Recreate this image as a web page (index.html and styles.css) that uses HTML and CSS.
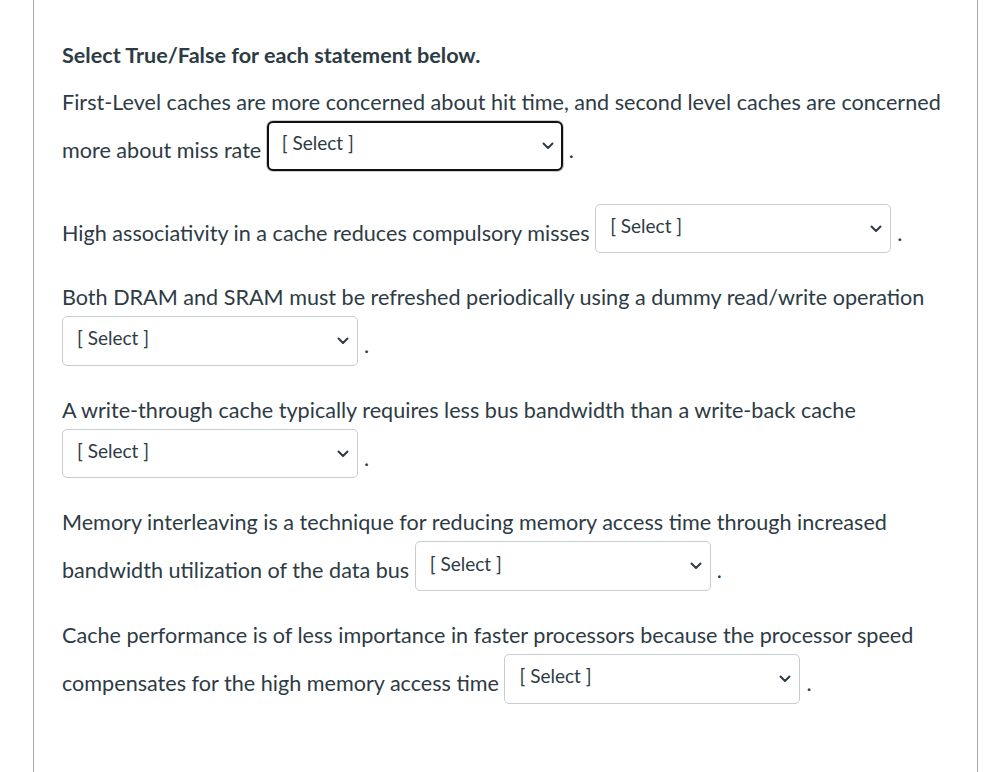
FILE: index.html
```html
<!DOCTYPE html>
<html lang="en">
<head>
<meta charset="utf-8">
<title>Quiz question</title>
<link rel="stylesheet" href="styles.css">
</head>
<body>
<div class="question">
  <p class="title">Select True/False for each statement below.</p>
  <p class="q">First-Level caches are more concerned about hit time, and second level caches are concerned more about miss rate <span class="dd focused"><select><option>[ Select ]</option><option>True</option><option>False</option></select><svg class="chev" viewBox="0 0 12 8" width="12" height="8"><path d="M1.5 1.5 L6 6 L10.5 1.5" fill="none" stroke="#2d3b45" stroke-width="2" stroke-linecap="round" stroke-linejoin="round"/></svg></span>.</p>
  <p class="q">High associativity in a cache reduces compulsory misses <span class="dd"><select><option>[ Select ]</option><option>True</option><option>False</option></select><svg class="chev" viewBox="0 0 12 8" width="12" height="8"><path d="M1.5 1.5 L6 6 L10.5 1.5" fill="none" stroke="#2d3b45" stroke-width="2" stroke-linecap="round" stroke-linejoin="round"/></svg></span>.</p>
  <p class="q">Both DRAM and SRAM must be refreshed periodically using a dummy read/write operation <span class="dd"><select><option>[ Select ]</option><option>True</option><option>False</option></select><svg class="chev" viewBox="0 0 12 8" width="12" height="8"><path d="M1.5 1.5 L6 6 L10.5 1.5" fill="none" stroke="#2d3b45" stroke-width="2" stroke-linecap="round" stroke-linejoin="round"/></svg></span>.</p>
  <p class="q">A write-through cache typically requires less bus bandwidth than a write-back cache <span class="dd"><select><option>[ Select ]</option><option>True</option><option>False</option></select><svg class="chev" viewBox="0 0 12 8" width="12" height="8"><path d="M1.5 1.5 L6 6 L10.5 1.5" fill="none" stroke="#2d3b45" stroke-width="2" stroke-linecap="round" stroke-linejoin="round"/></svg></span>.</p>
  <p class="q">Memory interleaving is a technique for reducing memory access time through increased bandwidth utilization of the data bus <span class="dd"><select><option>[ Select ]</option><option>True</option><option>False</option></select><svg class="chev" viewBox="0 0 12 8" width="12" height="8"><path d="M1.5 1.5 L6 6 L10.5 1.5" fill="none" stroke="#2d3b45" stroke-width="2" stroke-linecap="round" stroke-linejoin="round"/></svg></span>.</p>
  <p class="q">Cache performance is of less importance in faster processors because the processor speed compensates for the high memory access time <span class="dd"><select><option>[ Select ]</option><option>True</option><option>False</option></select><svg class="chev" viewBox="0 0 12 8" width="12" height="8"><path d="M1.5 1.5 L6 6 L10.5 1.5" fill="none" stroke="#2d3b45" stroke-width="2" stroke-linecap="round" stroke-linejoin="round"/></svg></span>.</p>
</div>
</body>
</html>
```
FILE: styles.css
```css
html, body {
  margin: 0;
  padding: 0;
  background: #ffffff;
}

body {
  font-family: Lato, "Open Sans", sans-serif;
  color: #2d3b45;
}

.question {
  box-sizing: border-box;
  margin-left: 33px;
  width: 945px;
  min-height: 100vh;
  border-left: 1px solid #a9a9a9;
  border-right: 1px solid #a9a9a9;
  padding: 40px 28px 0 28px;
}

.title {
  margin: 0 0 17px 0;
  font-size: 21.6px;
  line-height: 30px;
  font-weight: 700;
}

.q {
  margin: 0 0 25px 0;
  font-size: 21.6px;
  line-height: 30px;
}

.dd {
  display: inline-block;
  position: relative;
  margin: 4px 6px 4px 0;
  vertical-align: 8px;
}

.dd select {
  -webkit-appearance: none;
  appearance: none;
  box-sizing: border-box;
  width: 296px;
  height: 49.6px;
  margin: 0;
  padding: 0 30px 6px 14px;
  font-family: Lato, "Open Sans", sans-serif;
  font-size: 19px;
  color: #2d3b45;
  background: #ffffff;
  border: 1px solid #c7cdd1;
  border-radius: 5px;
  outline: none;
}

.dd.focused select {
  border: 2px solid #111111;
  border-radius: 6px;
  box-shadow: 0 0 0 1px #c7cdd1;
  padding-left: 13px;
}

.chev {
  position: absolute;
  right: 9px;
  top: 21px;
  pointer-events: none;
}
```
